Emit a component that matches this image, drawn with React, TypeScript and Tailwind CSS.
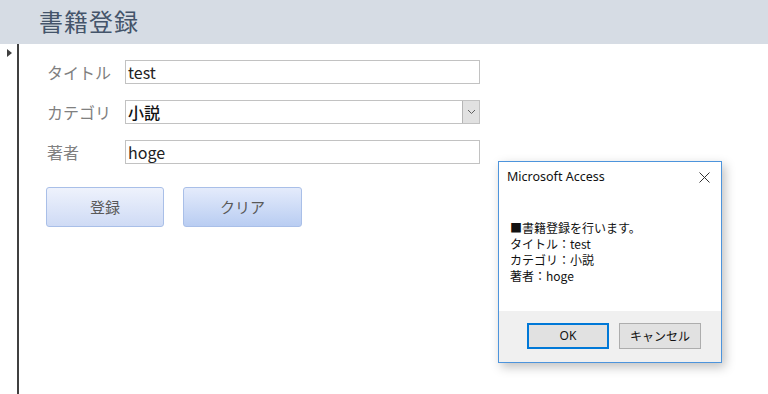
import React from "react";

const jp = { fontFamily: '"Noto Sans CJK JP", "Noto Sans", sans-serif' };
const ui = { fontFamily: '"Noto Sans", "Noto Sans CJK JP", sans-serif' };

function Field({ label, children }: { label: string; children: React.ReactNode }) {
  return (
    <div className="flex items-center h-[24px]">
      <div className="w-[78px] text-[16px] text-[#808080] leading-none">{label}</div>
      {children}
    </div>
  );
}

export default function App() {
  return (
    <div className="relative w-[768px] h-[394px] overflow-hidden bg-white" style={jp}>
      {/* Header */}
      <div className="h-[44px] bg-[#d6dce4] flex items-center pl-[39px]">
        <h1 className="text-[24px] leading-none text-[#44546a] tracking-[1px] -mt-[2px]">書籍登録</h1>
      </div>

      <div className="flex">
        {/* Record selector */}
        <div className="w-[19px] h-[350px] border-r-2 border-[#404040] pt-[5px] pl-[7px]">
          <div className="w-0 h-0 border-y-[4px] border-y-transparent border-l-[5px] border-l-[#404040]" />
        </div>

        {/* Form */}
        <div className="pl-[28px] pt-[16px]">
          <div className="flex flex-col gap-[16px]">
            <Field label="タイトル">
              <div className="w-[355px] h-[24px] border border-[#c2c2c2] px-[2px] flex items-center text-[16px] text-[#222]">
                test
              </div>
            </Field>
            <Field label="カテゴリ">
              <div className="w-[355px] h-[24px] border border-[#c2c2c2] flex">
                <div className="flex-1 px-[2px] flex items-center text-[16px] font-medium text-[#111]">小説</div>
                <div className="w-[17px] h-full bg-[#e1e1e1] border-l border-[#b5b5b5] flex items-center justify-center">
                  <svg width="9" height="6" viewBox="0 0 9 6">
                    <path d="M1 1 L4.5 4.5 L8 1" fill="none" stroke="#606060" strokeWidth="1" />
                  </svg>
                </div>
              </div>
            </Field>
            <Field label="著者">
              <div className="w-[355px] h-[24px] border border-[#c2c2c2] px-[2px] flex items-center text-[16px] text-[#222]">
                hoge
              </div>
            </Field>
          </div>

          <div className="flex gap-[19px] mt-[23px] -ml-[1px]">
            <button className="w-[118px] h-[40px] rounded-[3px] border border-[#a9bfe8] bg-gradient-to-b from-[#eef2fc] to-[#cfdbf5] text-[15px] text-[#595959]">
              登録
            </button>
            <button className="w-[119px] h-[40px] rounded-[3px] border border-[#a9bfe8] bg-gradient-to-b from-[#e4ebfb] to-[#b9cdf2] text-[15px] text-[#595959]">
              クリア
            </button>
          </div>
        </div>
      </div>

      {/* Message box */}
      <div className="absolute left-[498px] top-[161px] w-[224px] h-[202px] border border-[#4d94dc] bg-white flex flex-col shadow-[3px_4px_10px_rgba(0,0,0,0.25)]">
        <div className="h-[31px] flex items-center justify-between pl-[8px] pr-[11px]">
          <span className="text-[12.5px] text-[#111]" style={ui}>Microsoft Access</span>
          <svg width="11" height="11" viewBox="0 0 11 11">
            <path d="M0.5 0.5 L10.5 10.5 M10.5 0.5 L0.5 10.5" stroke="#333" strokeWidth="1" />
          </svg>
        </div>
        <div className="flex-1 pl-[11px] pt-[27px] text-[12px] leading-[16px] text-[#111]">
          <div>■書籍登録を行います。</div>
          <div>タイトル：test</div>
          <div>カテゴリ：小説</div>
          <div>著者：hoge</div>
        </div>
        <div className="h-[51px] bg-[#f0f0f0] flex items-start pt-[12px] pl-[28px] gap-[10px]">
          <button className="w-[82px] h-[26px] border-2 border-[#0078d7] bg-[#e1e1e1] text-[12px] text-[#111]" style={ui}>
            OK
          </button>
          <button className="w-[82px] h-[26px] border border-[#adadad] bg-[#e1e1e1] text-[12px] text-[#111]">
            キャンセル
          </button>
        </div>
      </div>
    </div>
  );
}
